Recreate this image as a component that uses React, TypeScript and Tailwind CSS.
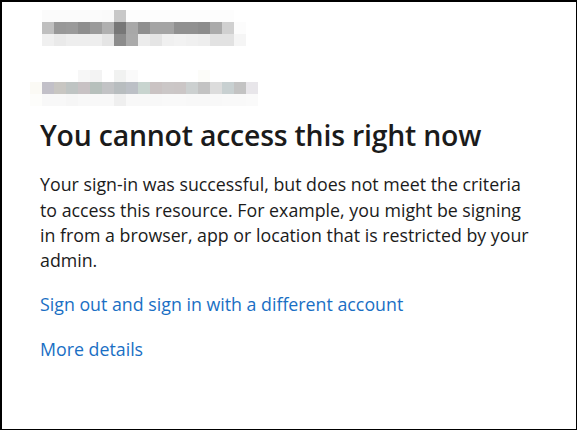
import React from "react";

const row1Mid = ["#bfbfbf","#989898","#9a9a9a","#8e8e8e","#9a9a9a","#b0b0b0","#777777","#a8a8a8","#8f8f8f","#a4a4a4","#a4a4a4","#909090","#909090","#8c8c8c","#aaaaaa","#d0d0d0","#fcfcfc"];
const row1Bot = ["#f0f0f0","#eaeaea","#eeeeee","#eeeeee","#eeeeee","#e5e5e5","#8c8c8c","#aaaaaa","#ececec","#e5e5e5","#f0f0f0","#f2f2f2","#f0f0f0","#eeeeee","#e2e2e2","#e2e2e2","#f5f5f5"];
const row1Top = ["#fbfbfb","#fbfbfb","#fbfbfb","#fbfbfb","#fbfbfb","#fafafa","#c8c8c8","#fdfdfd","#fdfdfd","#fdfdfd","#fdfdfd","#fdfdfd","#fdfdfd","#fdfdfd","#fdfdfd","#fdfdfd","#ffffff"];
const row2Mid = ["#fbfaf5","#c2c0c8","#c8c6c2","#bfc4c3","#c8c2c4","#b7c0bc","#c2c3c5","#b8bdbf","#bcc0c6","#c8d4cf","#cac3c3","#cbc7c7","#cbc6c6","#ccd0d0","#c3c3c3","#dcdcdc","#c8d0d1","#c3c3c3","#e8e6ea"];
const row2Top = ["#ffffff","#ffffff","#ffffff","#ffffff","#f7f7f7","#f3f3f3","#ffffff","#f1f2f1","#fafafa","#ffffff","#ffffff","#ffffff","#ffffff","#ffffff","#fcfcf9","#ffffff","#ffffff","#ffffff","#ffffff"];
const row2Bot = ["#fdfdfb","#f8f8f8","#f8f8f8","#f6f6f6","#f8f8f8","#f8f8f8","#f8f8f8","#efefef","#f8f8f8","#f8f8f8","#f8f8f8","#f9f9f9","#f9f9f9","#f8f8f8","#f8f8f8","#f8f8f8","#f9f9f9","#f9f9f9","#fafafa"];

function Mosaic({ rows, className }: { rows: string[][]; className?: string }) {
  const cols = rows[0].length;
  return (
    <svg className={className} width={cols * 12} height={rows.length * 12} viewBox={`0 0 ${cols * 12} ${rows.length * 12}`} shapeRendering="crispEdges">
      {rows.map((r, y) => r.map((c, x) => <rect key={`${x}-${y}`} x={x * 12} y={y * 12} width={12} height={12} fill={c} />))}
    </svg>
  );
}

export default function App() {
  return (
    <div className="w-[578px] h-[430px] bg-white">
      <div className="w-[577px] h-[430px] border-l-2 border-t-2 border-r border-b border-black bg-white pl-[38px] pr-[10px]" style={{ fontFamily: '"Open Sans", "Noto Sans", sans-serif' }}>
        <div className="flex flex-col">
          <Mosaic rows={[row1Top, row1Mid, row1Bot]} className="ml-[2px] mt-[8px]" />
          <Mosaic rows={[row2Top, row2Mid, row2Bot]} className="ml-[-10px] mt-[24px]" />
        </div>
        <h1 className="mt-[11px] text-[28.4px] leading-[36px] font-semibold text-[#1b1b1b] tracking-[-0.2px] whitespace-nowrap">You cannot access this right now</h1>
        <p className="mt-[19.4px] text-[17.8px] leading-[25.3px] text-[#1b1b1b] whitespace-nowrap">
          Your sign-in was successful, but does not meet the criteria<br />
          to access this resource. For example, you might be signing<br />
          in from a browser, app or location that is restricted by your<br />
          admin.
        </p>
        <div className="mt-[18.8px] text-[17.8px] leading-[25.3px] text-[#1a6fc4]">Sign out and sign in with a different account</div>
        <div className="mt-[19.7px] text-[17.8px] leading-[25.3px] text-[#1a6fc4]">More details</div>
      </div>
    </div>
  );
}
